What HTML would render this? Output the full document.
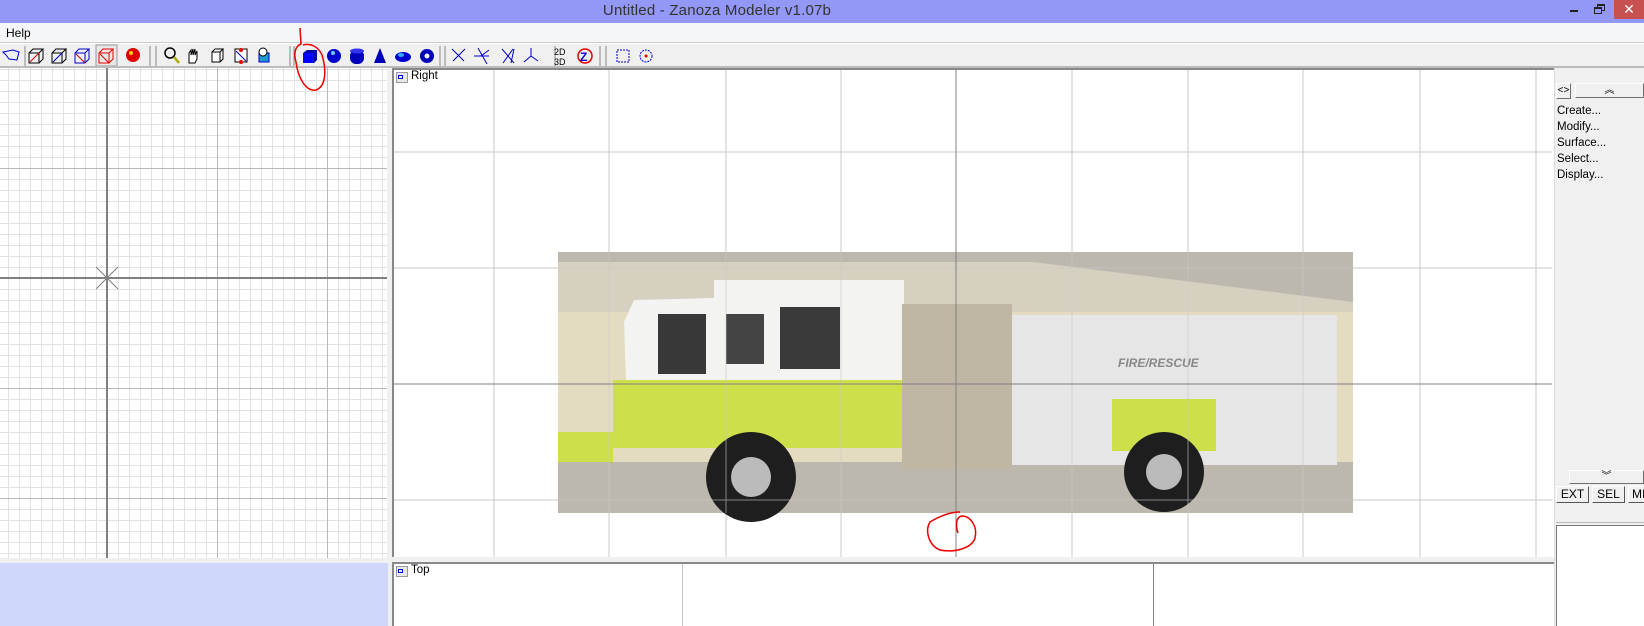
<!DOCTYPE html>
<html><head><meta charset="utf-8"><style>
*{margin:0;padding:0;box-sizing:border-box}
body{width:1644px;height:626px;overflow:hidden;background:#f0f0f0;font-family:"Liberation Sans",sans-serif;position:relative}
.a{position:absolute}
.t{font-size:11.5px;color:#000}
.btn{position:absolute;background:#f0f0f0;border:1px solid;border-color:#fff #707070 #707070 #fff;font-size:12px;text-align:center;line-height:14px}
</style></head><body>
<div class="a" style="left:0;top:0;width:1644px;height:23px;background:#9397f5"></div>
<div class="a" style="left:0;top:2px;width:1644px;text-align:center;font-size:15px;color:#333;padding-right:210px;letter-spacing:0.2px">Untitled - Zanoza Modeler v1.07b</div>
<div class="a" style="left:1570px;top:10px;width:8px;height:2px;background:#222"></div>
<div class="a" style="left:1597px;top:4px;width:8px;height:7px;border:1px solid #222;border-top-width:2px"></div>
<div class="a" style="left:1594px;top:7px;width:8px;height:7px;border:1px solid #222;border-top-width:2px;background:#9397f5"></div>
<div class="a" style="left:1614px;top:0;width:30px;height:19px;background:#c75050;color:#fff;font-size:14px;text-align:center;line-height:19px">✕</div>
<div class="a" style="left:0;top:23px;width:1644px;height:19px;background:#f5f6f7"></div>
<div class="a t" style="left:6px;top:26px;font-size:12px">Help</div>
<div class="a" style="left:0;top:42px;width:1644px;height:2px;background:#ccc;border-bottom:1px solid #fff"></div>
<svg class="a" style="left:0;top:44px" width="700" height="24">
<g stroke="#888" stroke-width="1">
<line x1="25" y1="2" x2="25" y2="22"/><line x1="150" y1="2" x2="150" y2="22"/><line x1="156" y1="2" x2="156" y2="22"/><line x1="290" y1="2" x2="290" y2="22"/><line x1="294" y1="2" x2="294" y2="22"/><line x1="440" y1="2" x2="440" y2="22"/><line x1="445" y1="2" x2="445" y2="22"/><line x1="555" y1="2" x2="555" y2="22"/><line x1="600" y1="2" x2="600" y2="22"/><line x1="606" y1="2" x2="606" y2="22"/>
</g>
<rect x="96" y="1" width="21" height="21" fill="#e8e8e8" stroke="#999"/>
<g fill="none" stroke="#000">
<path d="M3 8 l10 -2 l6 2 l-2 8 l-8 -1 l-3 -4z" stroke="#00c"/>
<path d="M29 9 h10 v10 h-10z M29 9 l4 -4 h10 l-4 4 M43 5 v10 l-4 4" /><path d="M30 18 l9 -9" stroke="#c00"/>
<path d="M52 9 h10 v10 h-10z M52 9 l4 -4 h10 l-4 4 M66 5 v10 l-4 4"/><path d="M53 18 l9 -9" stroke="#00c"/>
<path d="M75 9 h10 v10 h-10z M75 9 l4 -4 h10 l-4 4 M89 5 v10 l-4 4" stroke="#00c"/><path d="M76 10 l9 9" stroke="#c00"/>
<path d="M99 9 h10 v10 h-10z M99 9 l4 -4 h10 l-4 4 M113 5 v10 l-4 4" stroke="#e00"/><path d="M100 10 l9 9" stroke="#e00"/>
</g>
<circle cx="133" cy="11" r="7" fill="#d00"/><circle cx="131" cy="9" r="2" fill="#fc0"/>
<circle cx="170" cy="9" r="5" fill="none" stroke="#000" stroke-width="1.5"/><line x1="174" y1="13" x2="179" y2="19" stroke="#aa0" stroke-width="2.5"/>
<path d="M189 19 v-10 l2 -3 v5 l2 -6 v6 l2 -6 v6 l2 -4 v8 l-2 4z" fill="#fff" stroke="#000"/>
<path d="M212 8 h8 v10 h-8z M212 8 l3 -3 h8 l-3 3 M223 5 v10 l-3 3" fill="#fff" stroke="#000"/>
<rect x="235" y="5" width="12" height="13" fill="#fff" stroke="#000"/><path d="M236 7 l10 10" stroke="#00c"/><circle cx="241" cy="6" r="2" fill="#e00"/><circle cx="241" cy="18" r="2" fill="#e00"/>
<rect x="259" y="9" width="10" height="9" fill="#29c" stroke="#00c"/><circle cx="263" cy="8" r="4" fill="#fff" stroke="#000"/>
<path d="M303 9 h11 v10 h-11z" fill="#00f"/><path d="M303 9 l4 -3 h10 l-3 3z M314 9 l3 -3 v10 l-3 3z" fill="#00a"/>
<circle cx="334" cy="12" r="7" fill="#00c"/><circle cx="333" cy="9" r="2" fill="#6cf"/>
<rect x="350" y="6" width="14" height="14" rx="6" fill="#00b"/><ellipse cx="357" cy="7" rx="7" ry="2.5" fill="#33e"/>
<path d="M380 4 l-6 15 h12z" fill="#00b"/>
<ellipse cx="403" cy="13" rx="8" ry="5" fill="#00c"/><ellipse cx="401" cy="11" rx="3" ry="2" fill="#3af"/>
<circle cx="427" cy="12" r="7" fill="#00b"/><circle cx="427" cy="12" r="2.5" fill="#f0f0f0"/>
<g stroke="#00c" fill="none"><path d="M452 5 l12 12 M465 5 l-12 12"/><path d="M478 4 l9 16 M474 12 h15 M489 6 l-8 6"/><path d="M502 5 l12 14 M514 5 l-3 14 M503 19 l10 -14"/><path d="M531 4 v8 l-7 6 M531 12 l7 5"/></g>
<text x="554" y="11" font-size="9" font-family="Liberation Sans">2D</text><text x="554" y="21" font-size="9" font-family="Liberation Sans">3D</text>
<circle cx="585" cy="12" r="7" fill="none" stroke="#e00" stroke-width="1.5"/><text x="580" y="17" font-size="12" font-weight="bold" fill="#00c" font-family="Liberation Sans">Z</text>
<rect x="617" y="6" width="12" height="12" fill="none" stroke="#00c" stroke-dasharray="2 1"/>
<circle cx="646" cy="12" r="6" fill="none" stroke="#00c" stroke-dasharray="2 1"/><circle cx="646" cy="12" r="1.5" fill="#e00"/>
</svg>
<div class="a" style="left:0;top:66px;width:1644px;height:2px;background:#bbb"></div>
<div class="a" style="left:0;top:68px;width:388px;height:490px;background-color:#fff;background-image:linear-gradient(90deg,#e2e2e2 1px,transparent 1px),linear-gradient(#e2e2e2 1px,transparent 1px);background-size:11px 11px;background-position:8px 1px"></div>
<div class="a" style="left:0;top:68px;width:388px;height:490px;background-image:linear-gradient(90deg,#b8b8b8 1px,transparent 1px),linear-gradient(#b8b8b8 1px,transparent 1px);background-size:110px 110px;background-position:107px 100px"></div>
<div class="a" style="left:106px;top:68px;width:2px;height:490px;background:#808080"></div>
<div class="a" style="left:0;top:277px;width:388px;height:2px;background:#808080"></div>
<svg class="a" style="left:95px;top:266px" width="24" height="24"><path d="M1 1 L23 23 M23 1 L1 23" stroke="#808080"/></svg>
<div class="a" style="left:387px;top:68px;width:5px;height:558px;background:#f0f0f0"></div>
<div class="a" style="left:0;top:563px;width:388px;height:63px;background:#cfd8fb"></div>
<div class="a" style="left:392px;top:68px;width:1162px;height:489px;background:#fff;border-left:2px solid #888;border-top:2px solid #888"></div>
<svg class="a" style="left:394px;top:70px" width="1158" height="487">
<g stroke="#c8c8c8"><line x1="100" y1="0" x2="100" y2="487"/><line x1="215" y1="0" x2="215" y2="487"/><line x1="332" y1="0" x2="332" y2="487"/><line x1="447" y1="0" x2="447" y2="487"/><line x1="678" y1="0" x2="678" y2="487"/><line x1="794" y1="0" x2="794" y2="487"/><line x1="909" y1="0" x2="909" y2="487"/><line x1="1026" y1="0" x2="1026" y2="487"/><line x1="1142" y1="0" x2="1142" y2="487"/>
<line x1="0" y1="82" x2="1158" y2="82"/><line x1="0" y1="198" x2="1158" y2="198"/><line x1="0" y1="430" x2="1158" y2="430"/></g>
<g transform="translate(164,182)">
<rect width="795" height="261" fill="#e4dcc0"/>
<rect width="795" height="60" fill="#d6d0c0"/>
<path d="M0 0 h795 v50 l-320 -40 h-475z" fill="#bcb8ae"/>
<rect y="210" width="795" height="51" fill="#bdb8ae"/>
<rect x="55" y="128" width="290" height="68" fill="#cde04a"/>
<path d="M66 70 l10 -22 l80 -2 v-18 h190 v100 h-278z" fill="#f3f3f1"/>
<rect x="0" y="180" width="55" height="30" fill="#cde04a"/>
<rect x="344" y="52" width="110" height="165" fill="#bfb6a4"/>
<rect x="454" y="63" width="325" height="150" fill="#e6e6e6"/>
<rect x="554" y="147" width="104" height="52" fill="#cde04a"/>
<rect x="100" y="62" width="48" height="60" fill="#383838"/><rect x="168" y="62" width="38" height="50" fill="#444"/><rect x="222" y="55" width="60" height="62" fill="#3a3a3a"/>
<circle cx="193" cy="225" r="45" fill="#1e1e1e"/><circle cx="193" cy="225" r="20" fill="#bbb"/>
<circle cx="606" cy="220" r="40" fill="#1e1e1e"/><circle cx="606" cy="220" r="18" fill="#bbb"/>
<text x="560" y="115" font-size="12" font-style="italic" font-weight="bold" fill="#888" font-family="Liberation Sans">FIRE/RESCUE</text>
</g>
<g stroke="#c8c8c8" opacity="0.6"><line x1="215" y1="182" x2="215" y2="443"/><line x1="332" y1="182" x2="332" y2="443"/><line x1="447" y1="182" x2="447" y2="443"/><line x1="678" y1="182" x2="678" y2="443"/><line x1="794" y1="182" x2="794" y2="443"/><line x1="909" y1="182" x2="909" y2="443"/><line x1="164" y1="198" x2="959" y2="198"/><line x1="164" y1="430" x2="959" y2="430"/></g>
<line x1="562" y1="0" x2="562" y2="487" stroke="#808080"/>
<line x1="0" y1="314" x2="1158" y2="314" stroke="#808080"/>
</svg>
<div class="a" style="left:396px;top:72px;width:12px;height:11px;background:#e8e8e8;border:1px solid #999"></div>
<div class="a" style="left:398px;top:75px;width:5px;height:4px;border:1px solid #00c"></div>
<div class="a t" style="left:411px;top:70px">Right</div>
<div class="a" style="left:392px;top:562px;width:1162px;height:64px;background:#fff;border-left:2px solid #888;border-top:2px solid #888"></div>
<div class="a" style="left:682px;top:564px;width:1px;height:62px;background:#c8c8c8"></div>
<div class="a" style="left:1153px;top:564px;width:1px;height:62px;background:#808080"></div>
<div class="a" style="left:396px;top:566px;width:12px;height:11px;background:#e8e8e8;border:1px solid #999"></div>
<div class="a" style="left:398px;top:569px;width:5px;height:4px;border:1px solid #00c"></div>
<div class="a t" style="left:411px;top:564px">Top</div>
<div class="a" style="left:1554px;top:68px;width:90px;height:558px;background:#f0f0f0;border-left:1px solid #ddd"></div>
<div class="btn" style="left:1556px;top:83px;width:15px;height:16px;font-size:10px">&lt;&gt;</div>
<div class="btn" style="left:1575px;top:83px;width:69px;height:15px;font-size:10px">︽</div>
<div class="a t" style="left:1557px;top:103px;line-height:16px;font-size:11.5px">Create...<br>Modify...<br>Surface...<br>Select...<br>Display...</div>
<div class="btn" style="left:1569px;top:470px;width:75px;height:14px;font-size:10px;line-height:12px">︾</div>
<div class="btn" style="left:1556px;top:486px;width:33px;height:17px;border-color:#fff #555 #555 #fff">EXT</div>
<div class="btn" style="left:1592px;top:486px;width:33px;height:17px;border-color:#fff #555 #555 #fff">SEL</div>
<div class="btn" style="left:1628px;top:486px;width:20px;height:17px;border-color:#fff #555 #555 #fff;text-align:left;padding-left:3px">MI</div>
<div class="a" style="left:1556px;top:522px;width:88px;height:1px;background:#bbb"></div>
<div class="a" style="left:1556px;top:525px;width:88px;height:101px;background:#fff;border:1px solid #777;border-right:none;border-bottom:none"></div>
<svg class="a" style="left:0;top:0" width="1644" height="626">
<path d="M300 28 L301 44 C296 46 293 52 296 62 C298 78 306 92 316 90 C327 86 326 68 322 55 C318 46 310 43 303 45" fill="none" stroke="#e00" stroke-width="1.5"/>
<path d="M960 512 C950 512 940 516 930 522 C925 530 928 545 940 550 C955 553 972 548 975 538 C978 526 970 516 962 516 C955 517 956 527 958 533" fill="none" stroke="#e00" stroke-width="1.5"/>
</svg>
</body></html>
